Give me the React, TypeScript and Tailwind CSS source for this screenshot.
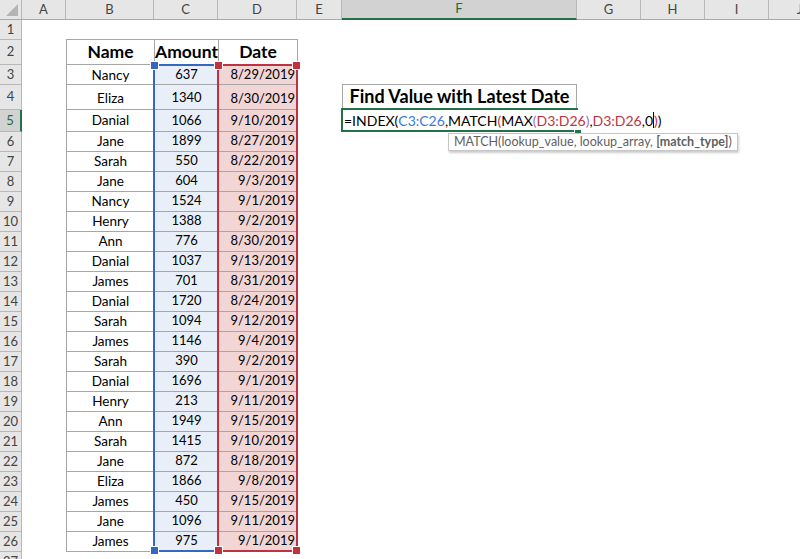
const columns = [
  { name: 'A', w: 'w-[44px]' },
  { name: 'B', w: 'w-[88px]' },
  { name: 'C', w: 'w-[64px]' },
  { name: 'D', w: 'w-[79px]' },
  { name: 'E', w: 'w-[45px]' },
  { name: 'F', w: 'w-[235px]' },
  { name: 'G', w: 'w-[64px]' },
  { name: 'H', w: 'w-[64px]' },
  { name: 'I', w: 'w-[64px]' },
  { name: 'J', w: 'w-[62px]' },
]

const data = [
  ['Nancy', '637', '8/29/2019'],
  ['Eliza', '1340', '8/30/2019'],
  ['Danial', '1066', '9/10/2019'],
  ['Jane', '1899', '8/27/2019'],
  ['Sarah', '550', '8/22/2019'],
  ['Jane', '604', '9/3/2019'],
  ['Nancy', '1524', '9/1/2019'],
  ['Henry', '1388', '9/2/2019'],
  ['Ann', '776', '8/30/2019'],
  ['Danial', '1037', '9/13/2019'],
  ['James', '701', '8/31/2019'],
  ['Danial', '1720', '8/24/2019'],
  ['Sarah', '1094', '9/12/2019'],
  ['James', '1146', '9/4/2019'],
  ['Sarah', '390', '9/2/2019'],
  ['Danial', '1696', '9/1/2019'],
  ['Henry', '213', '9/11/2019'],
  ['Ann', '1949', '9/15/2019'],
  ['Sarah', '1415', '9/10/2019'],
  ['Jane', '872', '8/18/2019'],
  ['Eliza', '1866', '9/8/2019'],
  ['James', '450', '9/15/2019'],
  ['Jane', '1096', '9/11/2019'],
  ['James', '975', '9/1/2019'],
]

function rowHeight(n: number) {
  if (n === 2 || n === 4) return 'h-[25px]'
  if (n === 5) return 'h-[22px]'
  return 'h-[20px]'
}

function namePad(n: number) {
  if (n === 4) return 'pt-[3px]'
  if (n === 3) return 'pt-[1px]'
  if (n === 5) return ''
  return 'pb-[1px]'
}

function amountPad(n: number) {
  if (n === 3 || n === 4) return 'pt-[1px]'
  if (n === 5) return ''
  return 'pb-[1px]'
}

function Handle({ className }: { className: string }) {
  return <div className={`absolute w-[7px] h-[7px] border border-white box-content ${className}`} />
}

export default function App() {
  const rows = Array.from({ length: 27 }, (_, i) => i + 1)

  return (
    <div className="relative w-[800px] h-[559px] overflow-hidden bg-white text-[13.5px] text-black font-['Lato','Liberation_Sans',sans-serif]">
      {/* column headers */}
      <div className="flex h-[20px] bg-[#e6e6e6] border-b border-[#a9a9a9] text-[13px] text-[#444]">
        <div className="relative w-[22px] shrink-0 border-r border-[#b8b8b8]">
          <div className="absolute right-[3px] bottom-[3px] w-0 h-0 border-l-[12px] border-l-transparent border-b-[12px] border-b-[#b4b4b4]" />
        </div>
        {columns.map(c => (
          <div
            key={c.name}
            className={`${c.w} shrink-0 flex items-center justify-center border-r border-[#b8b8b8] ${c.name === 'F' ? 'bg-[#d2d2d2] text-[#1f6b42] border-b-2 border-b-[#217346] h-[20px]' : ''}`}
          >
            {c.name}
          </div>
        ))}
      </div>

      <div className="flex">
        {/* row headers */}
        <div className="w-[22px] shrink-0 text-[13px] text-[#444]">
          {rows.map(n => (
            <div
              key={n}
              className={`${rowHeight(n)} flex items-center justify-center border-b border-r border-[#b8b8b8] ${n === 5 ? 'bg-[#d2d2d2] text-[#1f6b42] border-r-2 border-r-[#217346]' : 'bg-[#e6e6e6]'}`}
            >
              {n}
            </div>
          ))}
        </div>

        {/* sheet body */}
        <div className="relative">
          <div className="h-[19px]" />
          <div className="ml-[44px] w-[232px] border-t border-l border-[#a6a6a6]">
            <div className="flex h-[25px] text-[17.5px] font-bold">
              <div className="w-[88px] flex items-center justify-center border-r border-b border-[#a6a6a6]">Name</div>
              <div className="w-[64px] flex items-center justify-center border-r border-b border-[#a6a6a6] whitespace-nowrap">Amount</div>
              <div className="w-[79px] flex items-center justify-center border-r border-b border-[#a6a6a6]">Date</div>
            </div>
            {data.map((r, i) => (
              <div key={i} className={`flex ${rowHeight(i + 3)}`}>
                <div className={`w-[88px] flex items-center justify-center border-r border-b border-[#a6a6a6] ${namePad(i + 3)}`}>{r[0]}</div>
                <div className={`w-[64px] flex items-center justify-center border-r border-b border-[#a6a6a6] bg-[#e8eff8] text-[13px] ${amountPad(i + 3)}`}>{r[1]}</div>
                <div className={`w-[79px] flex items-center justify-end pr-[2px] border-r border-b border-[#a6a6a6] bg-[#f2d6d6] text-[13px] ${namePad(i + 3)}`}>{r[2]}</div>
              </div>
            ))}
          </div>

          {/* range highlight C3:C26 */}
          <div className="absolute left-[131px] top-[44px] w-[66px] h-[488px] border-2 border-[#3568c0]">
            <Handle className="-left-[5px] -top-[5px] bg-[#3568c0]" />
            <Handle className="-left-[5px] -bottom-[5px] bg-[#3568c0]" />
          </div>
          {/* range highlight D3:D26 */}
          <div className="absolute left-[195px] top-[44px] w-[81px] h-[488px] border-2 border-[#c0323f]">
            <Handle className="-left-[5px] -top-[5px] bg-[#c0323f]" />
            <Handle className="-right-[5px] -top-[5px] bg-[#c0323f]" />
            <Handle className="-left-[5px] -bottom-[5px] bg-[#c0323f]" />
            <Handle className="-right-[5px] -bottom-[5px] bg-[#c0323f]" />
          </div>

          {/* F4 title */}
          <div className="absolute left-[320px] top-[64px] w-[235px] h-[25px] flex items-center justify-center border border-[#a6a6a6] text-[18px] font-bold whitespace-nowrap">
            Find Value with Latest Date
          </div>

          {/* F5 in edit mode */}
          <div className="absolute left-[319px] top-[88px] w-[237px] h-[24px] border-2 border-r-0 border-[#217346]" />
          <div className="absolute left-[552px] top-[109px] w-[7px] h-[5px] bg-[#217346] border-l border-t border-white" />
          <div className="absolute left-[322px] top-[90px] h-[20px] flex items-center bg-white pr-[2px] whitespace-nowrap text-[14px]">
            =INDEX(<span className="text-[#3c78d8]">C3:C26</span>,MATCH<span className="text-[#c0323f]">(</span>MAX<span className="text-[#9a6fc4]">(</span><span className="text-[#c0323f]">D3:D26</span><span className="text-[#9a6fc4]">)</span>,<span className="text-[#c0323f]">D3:D26</span>,0<span className="inline-block w-px h-[16px] bg-black" /><span className="text-[#c0323f]">)</span>)
          </div>

          {/* function tooltip */}
          <div className="absolute left-[426px] top-[113px] h-[18px] flex items-center px-[5px] whitespace-nowrap bg-white border border-[#c6c6c6] shadow-[1px_2px_2px_rgba(0,0,0,0.2)] text-[12.5px] text-[#5f5f5f]">
            MATCH(lookup_value, lookup_array,&nbsp;<span className="font-bold">[match_type]</span>)
          </div>
        </div>
      </div>
    </div>
  )
}
